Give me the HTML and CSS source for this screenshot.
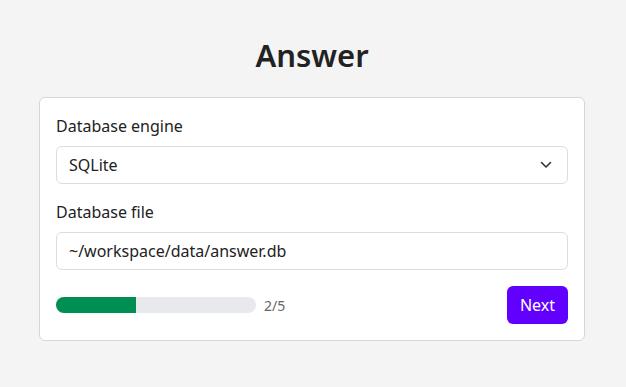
FILE: index.html
```html
<!DOCTYPE html>
<html lang="en">
<head>
  <meta charset="UTF-8">
  <meta name="viewport" content="width=device-width, initial-scale=1.0">
  <title>Answer</title>
  <link rel="stylesheet" href="styles.css">
</head>
<body>
<div class="page">
  <h1 class="title">Answer</h1>
  <div class="card">
    <div class="field">
      <label for="engine">Database engine</label>
      <div class="select-box">
        <select id="engine" class="control">
          <option>SQLite</option>
          <option>PostgreSQL</option>
          <option>MySQL</option>
        </select>
        <svg class="chevron" width="12" height="8" viewBox="0 0 12 8">
          <path d="M1.5 1.5 L6 6 L10.5 1.5" fill="none" stroke="#333" stroke-width="1.6" stroke-linecap="round" stroke-linejoin="round"/>
        </svg>
      </div>
    </div>
    <div class="field">
      <label for="file">Database file</label>
      <input id="file" class="control" type="text" value="~/workspace/data/answer.db">
    </div>
    <div class="footer">
      <div class="progress">
        <div class="bar">
          <div class="fill" style="width: 40%"></div>
        </div>
        <span class="step">2/5</span>
      </div>
      <button class="btn">Next</button>
    </div>
  </div>
</div>
</body>
</html>
```

FILE: styles.css
```css
body {
  margin: 0;
  background-color: #f4f4f4;
  font-family: "Noto Sans", "Open Sans", sans-serif;
  color: #222;
}

.page {
  padding: 36px 2px 0 0;
}

.title {
  margin: 0 0 23px;
  text-align: center;
  font-size: 31px;
  line-height: 38px;
  font-weight: 600;
  color: #222;
}

.card {
  width: 512px;
  margin: 0 auto;
  padding: 16px;
  background-color: #fff;
  border: 1px solid #d6d6d6;
  border-radius: 6px;
}

.field {
  margin-bottom: 16px;
}

.field label {
  display: block;
  font-size: 16px;
  line-height: 24px;
  margin-bottom: 8px;
}

.select-box {
  position: relative;
}

.control {
  display: block;
  box-sizing: border-box;
  width: 100%;
  height: 38px;
  padding: 0 12px;
  font-family: inherit;
  font-size: 16px;
  color: #222;
  background-color: #fff;
  border: 1px solid #dcdcdc;
  border-radius: 6px;
  outline: none;
}

select.control {
  appearance: none;
  -webkit-appearance: none;
}

.chevron {
  position: absolute;
  right: 16px;
  top: 15px;
  pointer-events: none;
}

.footer {
  display: flex;
  align-items: center;
  justify-content: space-between;
}

.progress {
  display: flex;
  align-items: center;
  gap: 8px;
}

.bar {
  width: 200px;
  height: 16px;
  background-color: #e8e9ec;
  border-radius: 8px;
  overflow: hidden;
}

.fill {
  height: 100%;
  background-color: #008f52;
}

.step {
  font-size: 14px;
  color: #666;
}

.btn {
  height: 38px;
  padding: 0 13px;
  font-family: inherit;
  font-size: 16px;
  color: #fff;
  background-color: #6200ff;
  border: none;
  border-radius: 6px;
  cursor: pointer;
}
```
